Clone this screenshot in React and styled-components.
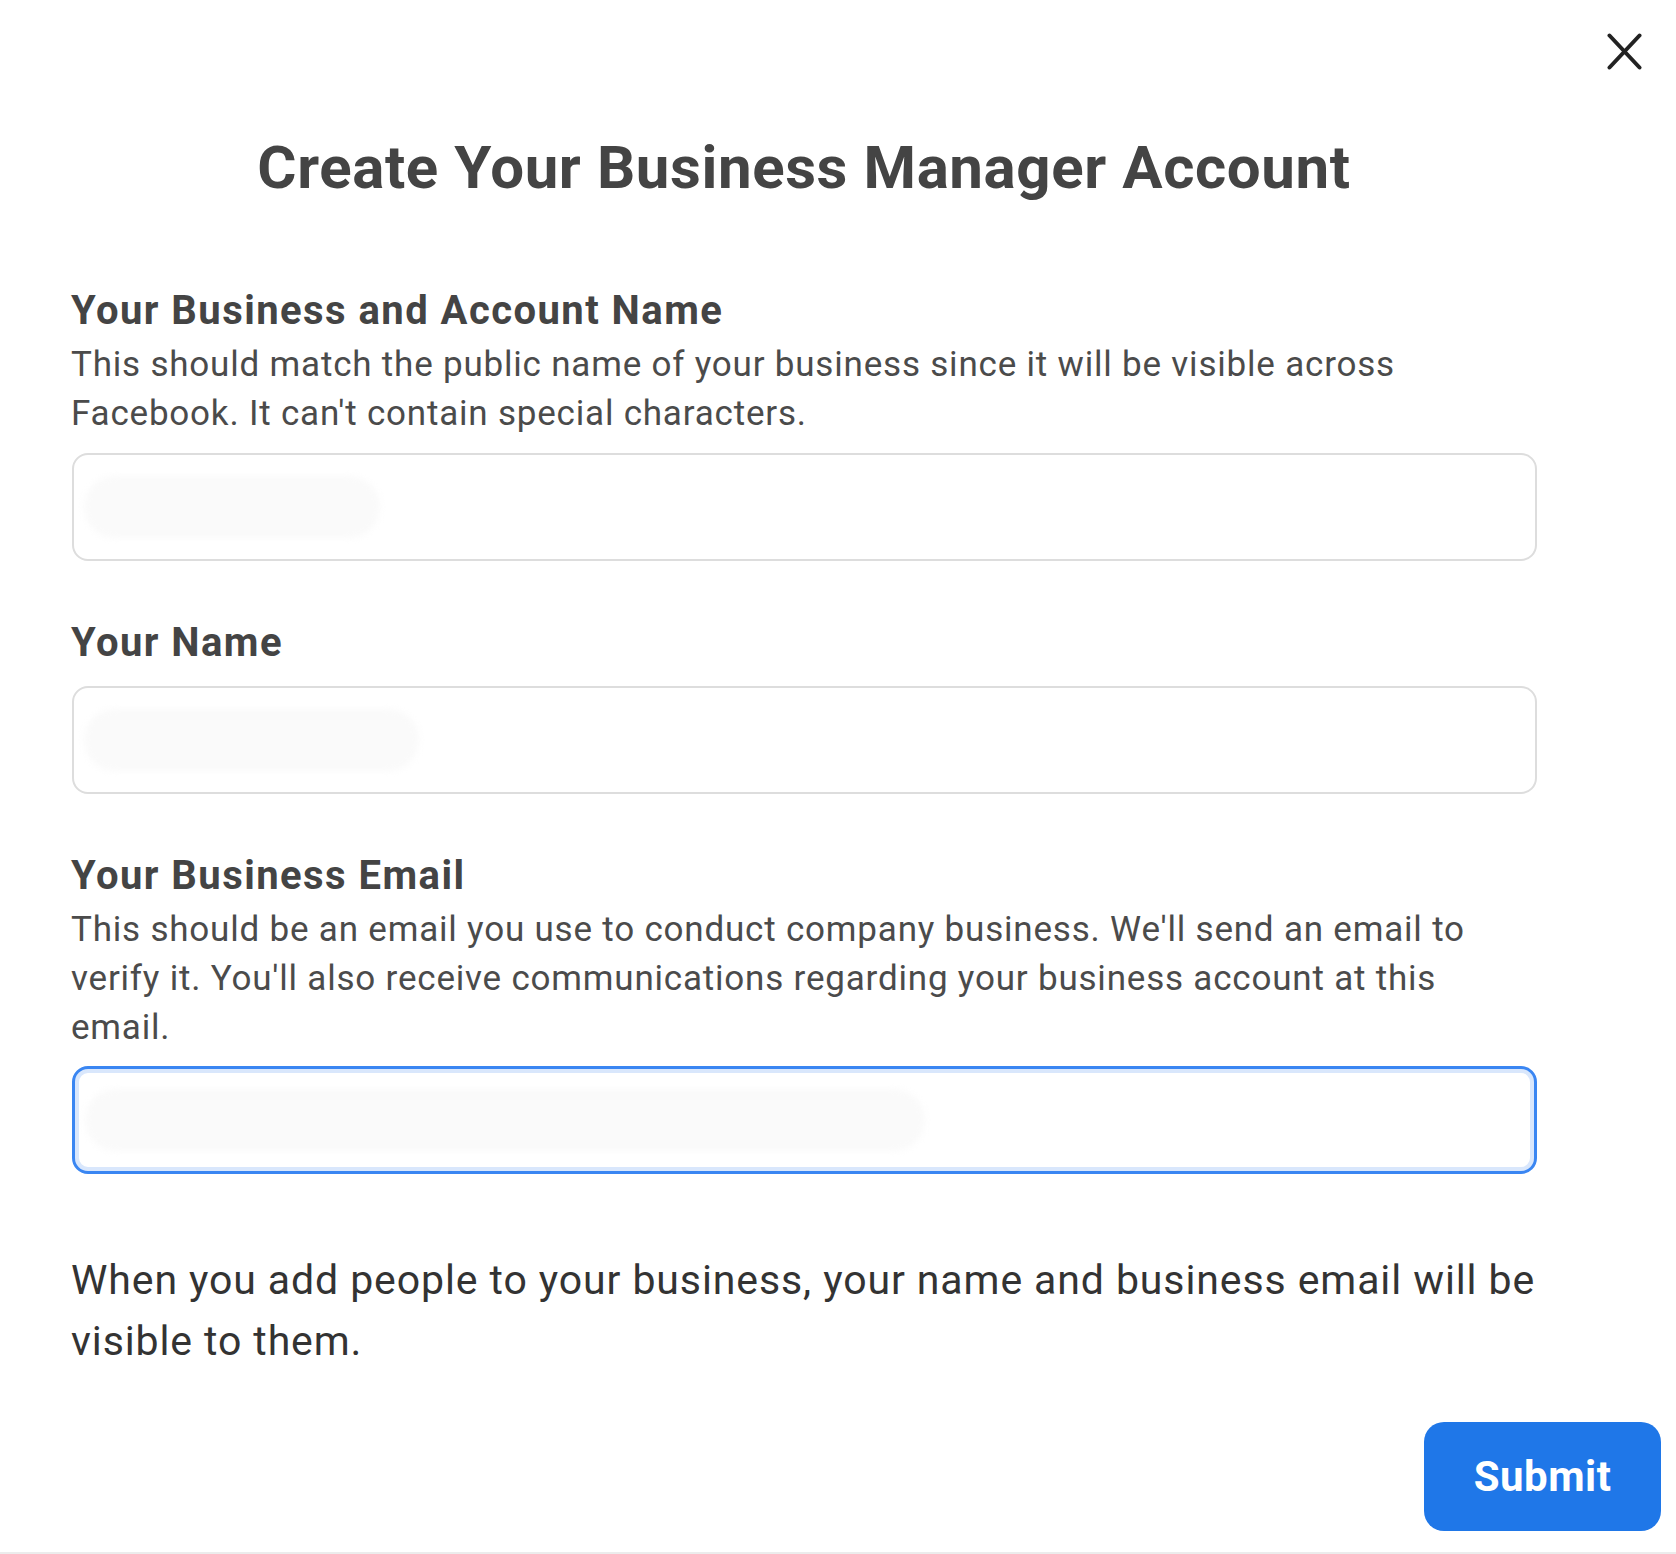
import React from "react"
import styled, { createGlobalStyle } from "styled-components"

const GlobalStyle = createGlobalStyle`
    html, body {
        margin: 0;
        padding: 0;
        background: #ffffff;
    }
    body {
        font-family: Roboto, "Liberation Sans", Arial, sans-serif;
        -webkit-font-smoothing: antialiased;
    }
    * {
        box-sizing: border-box;
    }
`

const Modal = styled.div`
    width: 1676px;
    min-height: 1554px;
    background: #ffffff;
    border-bottom: 2px solid #ececec;
    display: flex;
    flex-direction: column;
`

const Header = styled.div`
    display: flex;
    justify-content: flex-end;
    padding: 33px 34px 0 0;
`

const CloseButton = styled.button`
    width: 35px;
    height: 37px;
    padding: 0;
    border: none;
    background: transparent;
    cursor: pointer;
    display: flex;
    svg {
        display: block;
    }
`

const Body = styled.div`
    width: 1466px;
    margin-left: 71px;
    display: flex;
    flex-direction: column;
`

const Title = styled.h1`
    margin: 62px 0 0;
    font-size: 60px;
    line-height: 72px;
    font-weight: 700;
    letter-spacing: 0.6px;
    color: #444444;
    text-align: center;
`

const Section = styled.div`
    display: flex;
    flex-direction: column;
    margin-top: ${({ $top }) => $top}px;
`

const Label = styled.div`
    font-size: 40px;
    line-height: 46px;
    font-weight: 700;
    letter-spacing: 1.45px;
    color: #444444;
`

const Hint = styled.div`
    margin-top: 6px;
    max-width: 1420px;
    font-size: 35px;
    line-height: 49px;
    letter-spacing: 0.8px;
    color: #4b4b4b;
`

const Field = styled.div`
    margin: ${({ $gap }) => $gap}px 0 0 1px;
    height: 108px;
    border-radius: 16px;
    background: #ffffff;
    display: flex;
    align-items: center;
    padding: 0 10px;
    border: ${({ $focused }) => ($focused ? "3px solid #3a86f2" : "2px solid #dddddd")};
    box-shadow: ${({ $focused }) => ($focused ? "inset 0 0 0 4px #d9e7fc" : "none")};
`

const Blurred = styled.span`
    display: block;
    height: 62px;
    width: ${({ $width }) => $width}px;
    border-radius: 31px;
    background: #fafafa;
    filter: blur(3px);
`

const Note = styled.p`
    margin: 76px -30px 0 0;
    font-size: 41px;
    line-height: 61px;
    letter-spacing: 0.9px;
    color: #333333;
`

const Footer = styled.div`
    display: flex;
    justify-content: flex-end;
    padding-right: 15px;
    margin-top: 50px;
`

const SubmitButton = styled.button`
    width: 237px;
    height: 109px;
    border: none;
    border-radius: 20px;
    background: #1f77e8;
    color: #ffffff;
    font-family: Roboto, "Liberation Sans", Arial, sans-serif;
    font-size: 42px;
    font-weight: 700;
    letter-spacing: 0.5px;
    cursor: pointer;
`

const CloseIcon = () => (
    <svg width="35" height="37" viewBox="0 0 35 37">
        <path d="M2.5 2.5 L32.5 34.5 M32.5 2.5 L2.5 34.5" stroke="#222222" strokeWidth="4" strokeLinecap="round" />
    </svg>
)

const App = () => {
    return (
        <Modal>
            <GlobalStyle />
            <Header>
                <CloseButton aria-label="Close">
                    <CloseIcon />
                </CloseButton>
            </Header>
            <Body>
                <Title>Create Your Business Manager Account</Title>

                {/* business name */}
                <Section $top={84}>
                    <Label>Your Business and Account Name</Label>
                    <Hint>
                        This should match the public name of your business since it will be visible across
                        Facebook. It can't contain special characters.
                    </Hint>
                    <Field $gap={15}>
                        <Blurred $width={296} />
                    </Field>
                </Section>

                {/* your name */}
                <Section $top={59}>
                    <Label>Your Name</Label>
                    <Field $gap={20}>
                        <Blurred $width={335} />
                    </Field>
                </Section>

                {/* email */}
                <Section $top={59}>
                    <Label>Your Business Email</Label>
                    <Hint>
                        This should be an email you use to conduct company business. We'll send an email to
                        verify it. You'll also receive communications regarding your business account at this
                        email.
                    </Hint>
                    <Field $gap={14} $focused>
                        <Blurred $width={840} />
                    </Field>
                </Section>

                <Note>
                    When you add people to your business, your name and business email will be visible to
                    them.
                </Note>
            </Body>
            <Footer>
                <SubmitButton>Submit</SubmitButton>
            </Footer>
        </Modal>
    )
}

export default App
